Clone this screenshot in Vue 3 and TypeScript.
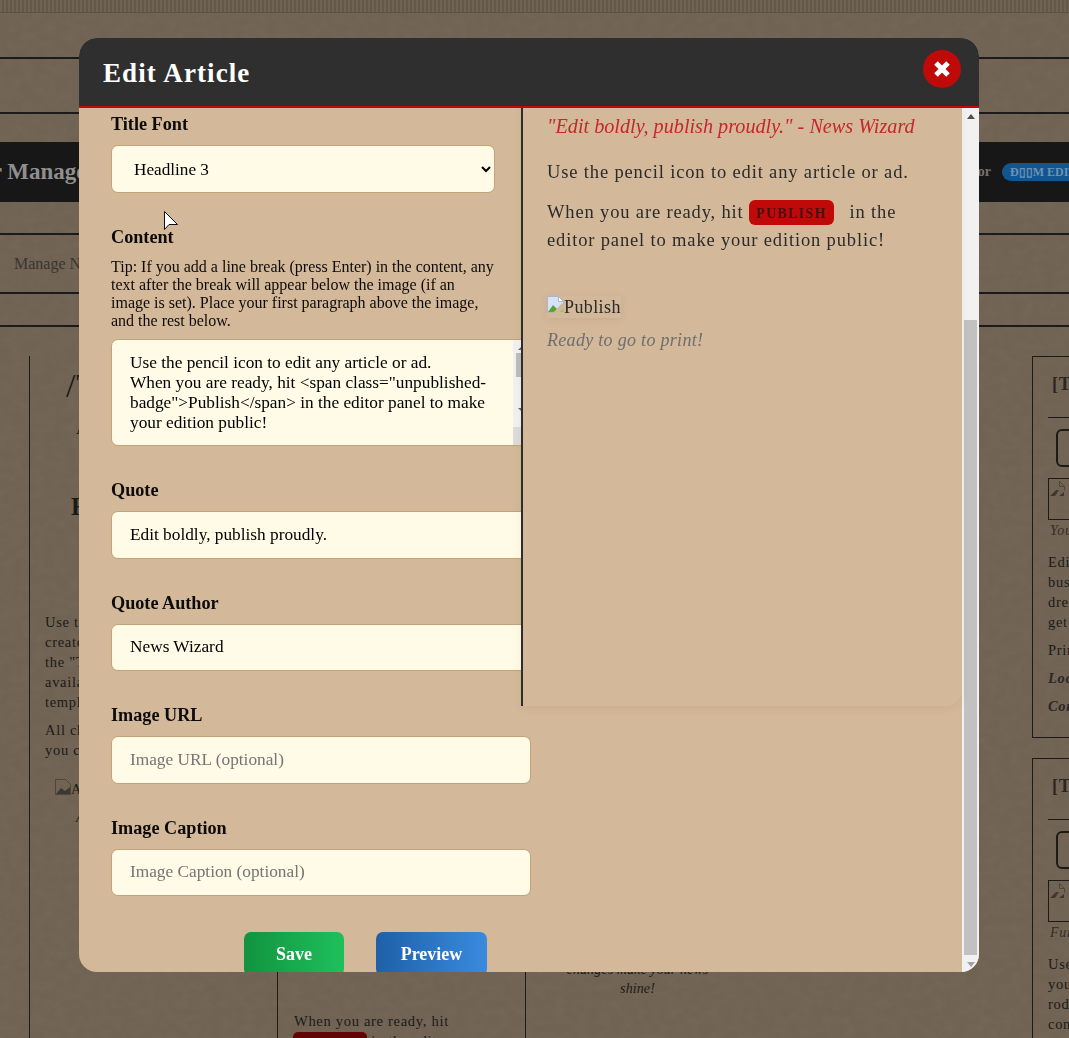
<script setup lang="ts">
const contentText =
  'Use the pencil icon to edit any article or ad.\nWhen you are ready, hit <span class="unpublished-badge">Publish</span> in the editor panel to make your edition public!'
const fields = [
  { label: 'Quote', value: 'Edit boldly, publish proudly.', placeholder: 'Quote' },
  { label: 'Quote Author', value: 'News Wizard', placeholder: 'Quote Author' },
  { label: 'Image URL', value: '', placeholder: 'Image URL (optional)' },
  { label: 'Image Caption', value: '', placeholder: 'Image Caption (optional)' },
]
const cards = [
  { title: '[The Tip]', caption: 'Your best work', lines: ['Edit your business', 'business details', 'dress it up', 'get noticed'], extra: ['Print ready'], bold: ['Location', 'Contact'] },
  { title: '[The Tip]', caption: 'Fun with ads', lines: ['Use your', 'your rods', 'rods and', 'contacts'], extra: [], bold: [] },
]
</script>

<template>
  <div class="page">
    <svg class="grain" width="1069" height="1038" aria-hidden="true">
      <filter id="paper">
        <feTurbulence type="fractalNoise" baseFrequency="0.09 0.12" numOctaves="4" seed="4" />
        <feColorMatrix values="0 0 0 0 0.2  0 0 0 0 0.16  0 0 0 0 0.12  0.55 0 0 0 -0.2" />
      </filter>
      <rect width="1069" height="1038" filter="url(#paper)" />
    </svg>

    <div class="backdrop-page">
      <div class="strip"></div>
      <div class="rule rule-a"></div>
      <div class="rule rule-b"></div>
      <div class="bar">
        <div class="bar-left">
          <span class="bar-title">Editor Manager</span>
          <span class="bar-role">Editor</span>
        </div>
        <span class="pill">Ð▯▯M EDITOR</span>
      </div>
      <nav class="nav"><span>Manage News</span></nav>
      <div class="rule rule-c"></div>

      <div class="columns">
        <section class="col col-one">
          <div class="big">/The Editor</div>
          <div class="sub">A guide</div>
          <div class="head">How to edit</div>
          <p>Use the pencil icon<br />create new stories<br />the "Template"<br />available to any<br />template editor</p>
          <p>All changes save<br />you can preview</p>
          <div class="broken-row">
            <svg class="bk" width="16" height="16" viewBox="0 0 16 16"><path d="M.5.5h10l5 5v10H.5z" fill="none" stroke="#4f463c" /><path d="M1 15l5-6 4 3 5-4v7z" fill="#3f382f" /></svg>
            <span>A</span>
          </div>
          <div class="col-cap">A caption</div>
        </section>
        <section class="col col-two">
          <p>When you are ready, hit<br /><span class="dark-badge">PUBLISH</span> in the edit</p>
        </section>
        <section class="col col-three">
          <p class="shine">changes make your news<br />shine!</p>
        </section>
        <aside class="side">
          <article v-for="(c, i) in cards" :key="i" class="card">
            <h4>{{ c.title }}</h4>
            <div class="card-btn"></div>
            <div class="card-img">
              <svg width="16" height="16" viewBox="0 0 16 16"><path d="M10.5.5l5 5v4M10.5.5v5h5" fill="none" stroke="#4f463c" /><path d="M1 15l6-6h3L6 15z" fill="#3f382f" /><path d="M10 15l5-4v4z" fill="#3f382f" /></svg>
            </div>
            <div class="card-cap">{{ c.caption }}</div>
            <p class="card-text"><template v-for="l in c.lines" :key="l">{{ l }}<br /></template></p>
            <p v-for="e in c.extra" :key="e" class="card-text">{{ e }}</p>
            <p v-for="b in c.bold" :key="b" class="card-text bi">{{ b }}</p>
          </article>
        </aside>
      </div>
    </div>

    <div class="overlay">
      <div class="modal">
        <header class="modal-head">
          <h2>Edit Article</h2>
          <button class="close" aria-label="Close">
            <svg width="20" height="20" viewBox="0 0 20 20"><path d="M4 4l12 12M16 4L4 16" stroke="#fff" stroke-width="5" /></svg>
          </button>
        </header>
        <div class="modal-body">
          <form class="form" @submit.prevent>
            <label class="lbl">Title Font</label>
            <select class="sel">
              <option>Headline 3</option>
            </select>
            <label class="lbl second">Content</label>
            <p class="tip">Tip: If you add a line break (press Enter) in the content, any text after the break will appear below the image (if an image is set). Place your first paragraph above the image, and the rest below.</p>
            <div class="area-box">
              <textarea class="area" :value="contentText"></textarea>
              <div class="area-bar">
                <div class="area-track">
                  <i class="mini up-mini"></i>
                  <b class="area-thumb"></b>
                  <i class="mini down-mini"></i>
                </div>
                <div class="area-corner"></div>
              </div>
            </div>
            <div v-for="f in fields" :key="f.label" class="field">
              <label class="lbl">{{ f.label }}</label>
              <input class="inp" :value="f.value" :placeholder="f.placeholder" />
            </div>
            <div class="actions">
              <button class="btn save">Save</button>
              <button class="btn preview">Preview</button>
            </div>
          </form>
          <section class="panel">
            <div class="quote">"Edit boldly, publish proudly." - News Wizard</div>
            <p class="para">Use the pencil icon to edit any article or ad.</p>
            <p class="para two">When you are ready, hit <span class="badge">PUBLISH</span> in the editor panel to make your edition public!</p>
            <div class="pic">
              <svg width="17" height="17" viewBox="0 0 17 17">
                <path d="M.5.5h11l5 5v11H.5z" fill="#d6e2f8" stroke="#aeb6c4" />
                <path d="M11.5.5v5h5z" fill="#fff" stroke="#aeb6c4" />
                <path d="M1 16l5-7 5 5 1 2z" fill="#5ba52e" />
                <path d="M7 16L15 7l2 2v8H7z" fill="#d3b899" />
                <path d="M12 16l5-4v4z" fill="#9ec46f" />
              </svg><span>Publish</span>
            </div>
            <div class="cap">Ready to go to print!</div>
          </section>
          <div class="scroll">
            <div class="scroll-btn up"></div>
            <div class="scroll-gap"></div>
            <div class="scroll-thumb"></div>
            <div class="scroll-btn down"></div>
          </div>
        </div>
      </div>
    </div>

    <svg class="cursor" width="15" height="20" viewBox="0 0 15 20" aria-hidden="true">
      <path d="M.5.5V18.5L5 13.5H13.5Z" fill="#fff" stroke="#111" stroke-width="1" />
    </svg>
  </div>
</template>

<style>
html, body { margin: 0; overflow: hidden; }
</style>

<style scoped>
.page {
  position: relative;
  width: 1069px;
  height: 1038px;
  overflow: hidden;
  background: #706354;
  font-family: "Liberation Serif", serif;
  color: #1c1a17;
}
.grain { position: absolute; left: 0; top: 0; }
.backdrop-page { position: relative; width: 1069px; }
.strip {
  height: 12px;
  background: repeating-linear-gradient(90deg, #6f6452 0 2px, #63594a 2px 4px);
  border-bottom: 1px solid #5d5345;
}
.rule { height: 2px; background: #1d1b19; }
.rule-a { margin-top: 44px; }
.rule-b { margin-top: 53px; }
.bar {
  margin-top: 28px;
  height: 60px;
  background: #171717;
  display: flex;
  align-items: center;
  overflow: hidden;
}
.bar-left {
  flex: 0 0 991px;
  display: flex;
  justify-content: space-between;
  align-items: center;
}
.bar-title { margin-left: -62px; font-weight: 700; font-size: 23px; color: #8f8f8f; }
.bar-role { font-weight: 700; font-size: 14px; color: #77736d; }
.pill {
  flex: none;
  margin-left: 11px;
  height: 18px;
  line-height: 18px;
  padding: 0 12px 0 8px;
  border-radius: 9px;
  background: #12558f;
  color: #6c93b5;
  font-weight: 700;
  font-size: 12px;
  white-space: nowrap;
}
.nav {
  margin-top: 31px;
  height: 57px;
  border-top: 2px solid #1d1b19;
  border-bottom: 2px solid #1d1b19;
  display: flex;
  align-items: center;
  padding-left: 14px;
  font-size: 16px;
  color: #3b352d;
}
.rule-c { margin-top: 31px; }
.columns {
  margin-top: 29px;
  padding-left: 29px;
  display: grid;
  grid-template-columns: 248px 248px 248px 259px 300px;
  height: 700px;
}
.col { border-left: 1px solid #1d1b19; font-size: 14.5px; letter-spacing: 0.7px; line-height: 20px; }
.col p { margin: 0; }
.col-one { padding: 0 15px; }
.big { margin: 12px 0 0 21px; font-size: 34px; line-height: 36px; white-space: nowrap; }
.sub { margin: 12px 0 0 31px; font-size: 18px; line-height: 24px; white-space: nowrap; }
.head { margin: 52px 0 0 26px; font-size: 25px; line-height: 30px; font-weight: 700; white-space: nowrap; }
.col-one p:first-of-type { margin-top: 90px; }
.col-one p + p { margin-top: 8px; }
.broken-row { display: flex; margin: 19px 0 0 10px; }
.col-cap { margin: 8px 0 0 31px; font-style: italic; white-space: nowrap; }
.col-two { padding: 655px 16px 0; }
.dark-badge {
  display: inline-block;
  width: 74px;
  height: 24px;
  margin-left: -1px;
  border-radius: 5px;
  background: #640505;
  color: #3a0a0a;
  font-size: 11px;
  font-weight: 700;
  text-align: center;
}
.col-three { padding: 604px 40px 0 16px; }
.shine { text-align: center; font-style: italic; line-height: 19px; letter-spacing: 0.1px; font-size: 14px; }
.side { grid-column: 5; }
.card {
  box-sizing: border-box;
  width: 300px;
  height: 382px;
  margin-bottom: 20px;
  padding: 14px 15px 0;
  border: 1px solid #1d1b19;
  font-size: 14.5px;
  letter-spacing: 0.7px;
}
.card h4 {
  margin: 0 0 11px;
  padding: 0 0 20px 4px;
  height: 26px;
  border-bottom: 1px solid #1d1b19;
  font-size: 18px;
  line-height: 26px;
  color: #2b2723;
}
.card-btn { margin: 0 0 11px 8px; width: 240px; height: 34px; border: 2px solid #1d1b19; border-radius: 6px; }
.card-img { box-sizing: border-box; width: 260px; height: 42px; border: 1px solid #1d1b19; }
.card-img svg { display: block; margin-top: 2px; }
.card-cap { margin: 2px 0 12px 2px; font-style: italic; font-size: 14px; line-height: 18px; color: #332e28; }
.card-text { margin: 0 0 8px; line-height: 20px; white-space: nowrap; }
.bi { font-weight: 700; font-style: italic; color: #2b2723; }

.overlay {
  position: fixed;
  left: 0;
  top: 0;
  width: 1069px;
  height: 1038px;
}
.modal {
  margin: 38px 0 0 79px;
  width: 900px;
  height: 934px;
  border-radius: 18px;
  overflow: hidden;
  background: #d3b899;
  display: flex;
  flex-direction: column;
}
.modal-head {
  flex: none;
  box-sizing: border-box;
  height: 70px;
  background: #2f2f2f;
  border-bottom: 2px solid #c00a0a;
  padding: 0 18px 0 24px;
  display: flex;
  justify-content: space-between;
}
.modal-head h2 {
  margin: 18px 0 0;
  font-size: 27px;
  line-height: 34px;
  letter-spacing: 1.1px;
  color: #fff;
}
.close {
  margin-top: 12px;
  width: 38px;
  height: 38px;
  padding: 0;
  border: 0;
  border-radius: 50%;
  background: #c00a0a;
  display: flex;
  align-items: center;
  justify-content: center;
}
.modal-body { flex: 1; display: flex; min-height: 0; }
.form {
  flex: 0 0 442px;
  box-sizing: border-box;
  padding: 4px 26px 0 32px;
  height: 864px;
}
.lbl { display: block; font-weight: 700; font-size: 18.2px; line-height: 24px; color: #0d0b09; white-space: nowrap; }
.second { margin-top: 32px; }
.sel {
  display: block;
  box-sizing: border-box;
  width: 100%;
  height: 48px;
  margin-top: 9px;
  padding: 0 18px;
  border: 1px solid #bfa477;
  border-radius: 7px;
  background: #fffbe6;
  color: #000;
  font-family: "Liberation Serif", serif;
  font-size: 17.2px;
}
.tip { margin: 9px 0 0; font-size: 16px; line-height: 18px; color: #0d0b09; }
.area-box {
  box-sizing: border-box;
  display: flex;
  width: calc(100% + 36px);
  height: 107px;
  margin-top: 9px;
  border: 1px solid #bfa477;
  border-radius: 7px;
  background: #fffbe6;
  overflow: hidden;
}
.area {
  flex: 1;
  min-width: 0;
  box-sizing: border-box;
  height: 100%;
  padding: 13px 18px;
  border: 0;
  background: transparent;
  color: #000;
  font-family: "Liberation Serif", serif;
  font-size: 17.3px;
  line-height: 20px;
  overflow: hidden;
  resize: none;
  outline: none;
}
.area-bar { flex: 0 0 17px; display: flex; flex-direction: column; }
.area-track {
  flex: 1;
  background: #f1f1f1;
  display: flex;
  flex-direction: column;
  align-items: center;
}
.area-thumb { display: block; flex: none; width: 12px; height: 24px; margin: 3px 0 0 1px; background: #bdbdbd; }
.mini { display: block; flex: none; width: 0; height: 0; border-left: 4px solid transparent; border-right: 4px solid transparent; }
.up-mini { margin-top: 6px; border-bottom: 4px solid #6a6a6a; }
.down-mini { margin-top: 31px; border-top: 4px solid #6a6a6a; }
.area-corner { flex: 0 0 18px; background: #dcdcdc; }
.field { margin-top: 32px; }
.inp {
  display: block;
  box-sizing: border-box;
  width: calc(100% + 36px);
  height: 47.5px;
  margin-top: 9px;
  padding: 0 18px;
  border: 1px solid #bfa477;
  border-radius: 7px;
  background: #fffbe6;
  color: #000;
  font-family: "Liberation Serif", serif;
  font-size: 17.3px;
  outline: none;
}
.inp::placeholder { color: #757575; opacity: 1; }
.actions { display: flex; gap: 32px; margin: 36px 0 0 133px; }
.btn {
  flex: none;
  height: 44px;
  border: 0;
  border-radius: 7px;
  color: #fff;
  font-family: "Liberation Serif", serif;
  font-size: 18px;
  font-weight: 700;
  padding: 0;
}
.save { width: 100px; background: linear-gradient(90deg, #11933f, #1fc05c); }
.preview { width: 111px; background: linear-gradient(90deg, #1f60a8, #3a8ade); }

.panel {
  flex: none;
  position: relative;
  z-index: 1;
  box-sizing: border-box;
  width: 441px;
  height: 598px;
  padding: 4px 24px 0;
  background: #d3b899;
  border-left: 2px solid #2d2d2d;
  border-radius: 0 0 16px 0;
  box-shadow: 0 3px 8px rgba(120, 90, 50, 0.08);
  color: #2b2b2b;
}
.quote { margin-top: 1px; font-style: italic; font-size: 20.2px; line-height: 26px; color: #c62828; white-space: nowrap; }
.para { margin: 19px 0 0; font-size: 18.5px; line-height: 28px; letter-spacing: 0.85px; }
.para.two { margin-top: 12px; }
.badge {
  display: inline-block;
  box-sizing: border-box;
  height: 25px;
  width: 85px;
  margin: 0 10px 0 0;
  border-radius: 6px;
  background: #c00a0a;
  color: #4a1010;
  font-size: 14px;
  font-weight: 700;
  line-height: 27px;
  letter-spacing: 1.3px;
  text-align: center;
  vertical-align: 0;
}
.pic {
  display: flex;
  width: max-content;
  margin-top: 42px;
  font-size: 18px;
  line-height: 22px;
  letter-spacing: 0.4px;
  box-shadow: 0 2px 8px rgba(120, 90, 50, 0.1);
}
.cap { margin-top: 11px; font-style: italic; font-size: 18px; line-height: 22px; color: #6f6f6f; letter-spacing: 0.3px; }
.scroll {
  flex: none;
  width: 17px;
  height: 864px;
  background: #f1f1f1;
  display: flex;
  flex-direction: column;
  align-items: center;
}
.scroll-btn { flex: none; width: 0; height: 0; border-left: 4px solid transparent; border-right: 4px solid transparent; }
.up { margin: 6px 0 5px; border-bottom: 5px solid #505050; }
.down { margin: 7px 0 5px; border-top: 5px solid #a3a3a3; }
.scroll-gap { flex: 0 0 196px; }
.scroll-thumb { flex: 1; width: 13px; background: #c1c1c1; }
.cursor { position: absolute; left: 164px; top: 211px; }
</style>
